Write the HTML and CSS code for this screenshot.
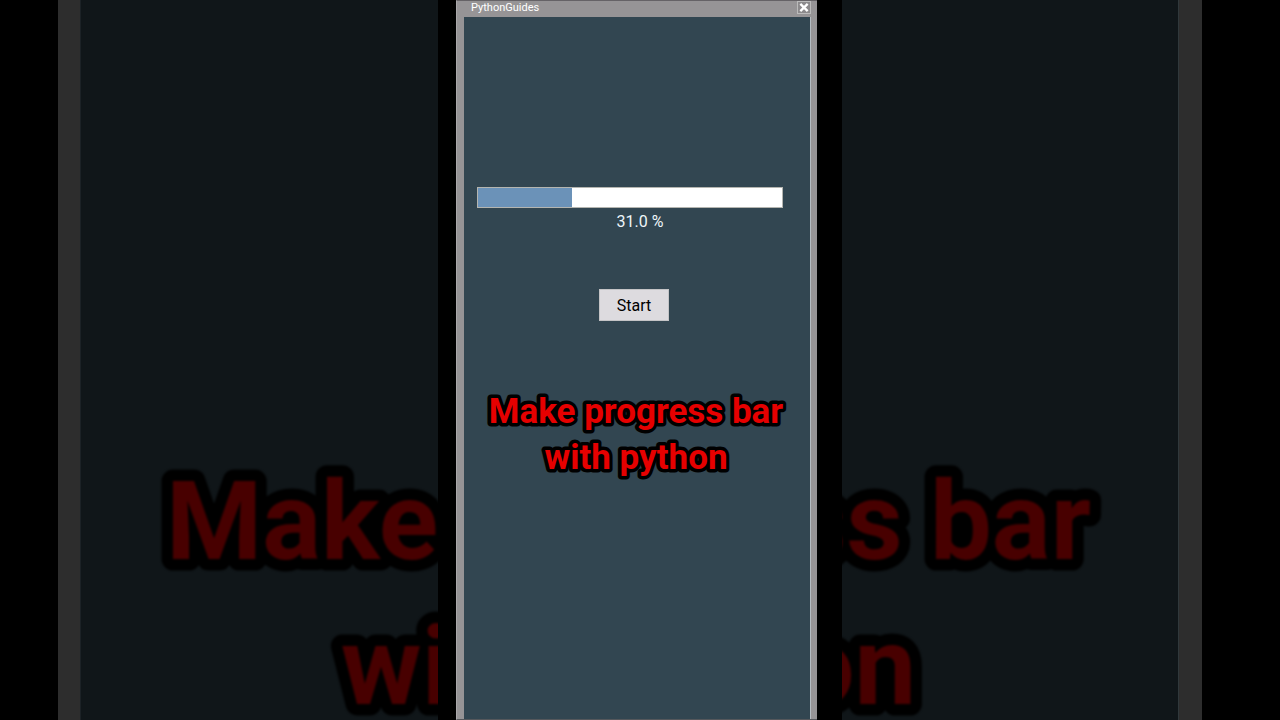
FILE: index.html
```html
<!DOCTYPE html>
<html lang="en">
<head>
  <meta charset="UTF-8">
  <meta name="viewport" content="width=device-width, initial-scale=1.0">
  <title>PythonGuides</title>

  <link rel="stylesheet" href="styles.css">
</head>
<body>

  <div class="backdrop" aria-hidden="true">
    <div class="backwindow">
      <svg class="outlined backtext">
        <text x="50%" y="119">Make progress bar</text>
        <text x="50%" y="264">with python</text>
      </svg>
    </div>
  </div>

  <div class="phone">
    <div class="window">
      <div class="titlebar">
        <span class="name">PythonGuides</span>
        <button class="close" type="button" aria-label="Close">
          <svg viewBox="0 0 12 12"><path d="M2 2L10 10M10 2L2 10"/></svg>
        </button>
      </div>
      <div class="content">
        <progress id="bar" max="100" value="31" aria-labelledby="percent"></progress>
        <p id="percent">31.0 %</p>
        <button id="start" type="button">Start</button>
        <svg class="outlined caption">
          <text x="50%" y="43">Make progress bar</text>
          <text x="50%" y="89">with python</text>
        </svg>
      </div>
    </div>
  </div>


  <script>
    var timer;
    var bar = document.getElementById('bar');

    document.getElementById('start').addEventListener('click', function(){
      clearInterval(timer);
      bar.value = 0;
      timer = setInterval(function(){
        bar.value = bar.value + 1;
        document.getElementById('percent').innerHTML = bar.value.toFixed(1) + " %";
        if(bar.value >= 100){
          clearInterval(timer);
        }
      }, 50);
    });
  </script>

</body>
</html>
```
FILE: styles.css
```css
*{
  margin: 0;
  padding: 0;
  box-sizing: border-box;
  font-family: Roboto, "Liberation Sans", sans-serif;
}
body{
  position: relative;
  background: #000;
  min-height: 100vh;
  display: flex;
  justify-content: center;
  overflow: hidden;
}
/* dimmed, enlarged copy behind the phone */
.backdrop{
  position: absolute;
  inset: 0;
  padding: 0 78px 0 58px;
  overflow: hidden;
}
.backwindow{
  height: 100%;
  background: #101619;
  border: solid #2d2d2d;
  border-width: 0 23px 0 22px;
  box-shadow: inset 1px 0 #1c2226, inset -1px 0 #30383b;
  padding: 440px 2px 0 0;
}
.outlined{
  display: block;
  width: 100%;
  overflow: visible;
  font-weight: 700;
  text-anchor: middle;
  stroke: #000;
  stroke-linejoin: round;
  paint-order: stroke;
}
.backtext{
  height: 300px;
  font-size: 110px;
  fill: #480000;
  stroke-width: 23px;
  filter: blur(1px);
}
.phone{
  position: relative;
  width: 100%;
  max-width: 404px;
  background: #000;
  padding: 0 25px 0 18px;
  display: flex;
}
.window{
  flex: 1;
  display: flex;
  flex-direction: column;
  background: #969496;
  border-top: 1px solid #656266;
  border-bottom: 1px solid #55585c;
  border-left: 1px solid #aaa8aa;
}
.titlebar{
  display: flex;
  justify-content: space-between;
  align-items: center;
  height: 16px;
  padding: 0 6px 3px 14px;
}
.name{
  font-size: 11px;
  line-height: 13px;
  color: #fff;
}
.close{
  width: 14px;
  height: 13px;
  border: 1px solid #bbb;
  background: #8c8a8c;
}
.close svg{
  display: block;
  width: 12px;
  height: 11px;
}
.close path{
  stroke: #fff;
  stroke-width: 2.5;
}
.content{
  flex: 1;
  display: flex;
  flex-direction: column;
  align-items: center;
  background: #324651;
  margin: 0 6px 0 7px;
  border-right: 1px solid #b4bcc2;
  padding: 170px 27px 0 13px;
}
#bar{
  -webkit-appearance: none;
  appearance: none;
  display: block;
  width: 100%;
  height: 21px;
  border: 1px solid #b4b5b0;
}
#bar::-webkit-progress-bar{
  background: #fff;
}
#bar::-webkit-progress-value{
  background: #6b92b8;
}
#percent{
  margin-top: 4px;
  padding-left: 20px;
  font-size: 16px;
  line-height: 20px;
  color: #eef6fa;
}
#start{
  width: 70px;
  height: 32px;
  margin: 57px 0 0 8px;
  border: 1px solid #c4c4c6;
  background: #dddbdf;
  font-size: 16px;
  color: #000;
}
.caption{
  height: 100px;
  margin-top: 59px;
  padding-left: 12px;
  font-size: 35px;
  fill: #e60000;
  stroke-width: 7px;
}
```
